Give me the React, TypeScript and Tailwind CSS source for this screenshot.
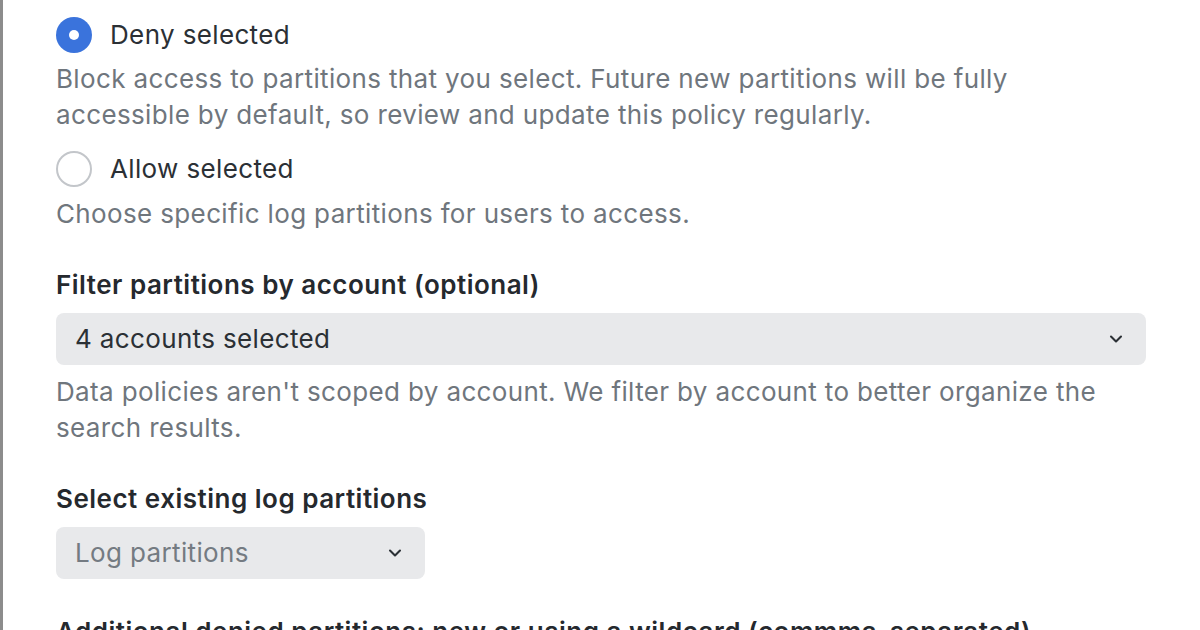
import { ChevronDown } from "lucide-react";

const Radio = ({ checked, label }: { checked: boolean; label: string }) => (
  <label className="flex h-9 items-center gap-[18px] text-[#2b3035]">
    {checked ? (
      <span className="flex h-9 w-9 items-center justify-center rounded-full bg-[#3a73dc]">
        <span className="h-[10px] w-[10px] rounded-full bg-white" />
      </span>
    ) : (
      <span className="h-9 w-9 rounded-full border-2 border-[#c3c6ca] bg-white" />
    )}
    <span>{label}</span>
  </label>
);

const Select = ({ value, placeholder, className }: { value: string; placeholder?: boolean; className: string }) => (
  <div
    className={`mt-[10px] flex h-[52px] items-center justify-between rounded-lg bg-[#e8e9eb] pr-[20px] pl-[19px] ${className}`}
  >
    <span className={placeholder ? "text-[#747b82]" : "text-[#2b3035]"}>{value}</span>
    <ChevronDown size={20} strokeWidth={2.5} className="text-[#2b3035]" />
  </div>
);

export default function App() {
  return (
    <div
      className="h-[630px] w-[1200px] overflow-hidden border-l-[3px] border-[#8c8c8c] bg-white pt-[17px] pl-[53px] text-[26px] leading-[36px] tracking-[0.36px]"
      style={{ fontFamily: "Inter, 'Noto Sans', sans-serif" }}
    >
      <Radio checked label="Deny selected" />
      <p className="mt-2 w-[1000px] text-[#6f767d]">
        Block access to partitions that you select. Future new partitions will be fully accessible by default, so
        review and update this policy regularly.
      </p>

      <div className="mt-[18px]">
        <Radio checked={false} label="Allow selected" />
      </div>
      <p className="mt-[9px] text-[#6f767d]">Choose specific log partitions for users to access.</p>

      <h3 className="mt-[35px] font-semibold tracking-[0.5px] text-[#25292e]">Filter partitions by account (optional)</h3>
      <Select value="4 accounts selected" className="w-[1090px]" />
      <p className="mt-[9px] w-[1080px] text-[#6f767d]">
        Data policies aren't scoped by account. We filter by account to better organize the search results.
      </p>

      <h3 className="mt-[35px] font-semibold tracking-[0.5px] text-[#25292e]">Select existing log partitions</h3>
      <Select value="Log partitions" placeholder className="w-[369px]" />

      <h3 className="mt-[35px] whitespace-nowrap font-semibold tracking-[0.5px] text-[#25292e]">
        Additional denied partitions: new or using a wildcard (commma-separated)
      </h3>
    </div>
  );
}
